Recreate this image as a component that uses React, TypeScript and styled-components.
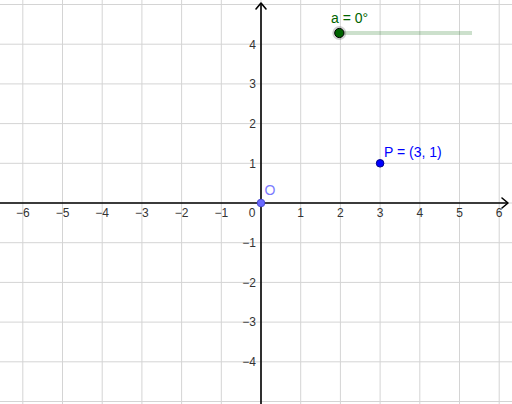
import React from "react";
import styled, { createGlobalStyle } from "styled-components";

const GlobalStyle = createGlobalStyle`
  html, body { margin: 0; padding: 0; background: #ffffff; }
  body { font-family: "Liberation Sans", Arial, sans-serif; overflow: hidden; }
`;

const W = 512;
const H = 404;
const OX = 261;
const OY = 203;
const U = 39.7;

const GraphView = styled.div`
  width: ${W}px;
  height: ${H}px;
  background: #ffffff;
  overflow: hidden;
`;

const Canvas = styled.svg`
  display: block;
  width: ${W}px;
  height: ${H}px;
`;

const GridLine = styled.line`
  stroke: #d4d4d4;
  stroke-width: 1;
`;

const AxisLine = styled.line`
  stroke: #000000;
  stroke-width: 1.6;
`;

const Arrow = styled.polyline`
  fill: none;
  stroke: #000000;
  stroke-width: 1.6;
  stroke-linecap: round;
  stroke-linejoin: round;
`;

const TickLabel = styled.text<{ $anchor: "middle" | "end" }>`
  font-family: "Liberation Sans", Arial, sans-serif;
  font-size: 12px;
  fill: #333333;
  text-anchor: ${(p) => p.$anchor};
`;

const ObjLabel = styled.text<{ $color: string }>`
  font-family: "Liberation Sans", Arial, sans-serif;
  font-size: 14px;
  fill: ${(p) => p.$color};
`;

const PointDot = styled.circle<{ $fill: string; $stroke: string }>`
  fill: ${(p) => p.$fill};
  stroke: ${(p) => p.$stroke};
  stroke-width: 1;
`;

const SliderTrack = styled.line`
  stroke: #006400;
  stroke-opacity: 0.2;
  stroke-width: 4;
`;

const Halo = styled.circle`
  fill: #000000;
  fill-opacity: 0.18;
`;

const fmt = (k: number) => (k < 0 ? `\u2212${-k}` : `${k}`);

const xs = [-6, -5, -4, -3, -2, -1, 1, 2, 3, 4, 5, 6];
const ys = [-4, -3, -2, -1, 1, 2, 3, 4];

export default function App() {
  const gridX: number[] = [];
  for (let k = -7; k <= 7; k++) gridX.push(OX + k * U);
  const gridY: number[] = [];
  for (let k = -6; k <= 6; k++) gridY.push(OY - k * U);

  const px = OX + 3 * U;
  const py = OY - 1 * U;
  const sx = 339.3;
  const sy = 33;

  return (
    <>
      <GlobalStyle />
      <GraphView>
        <Canvas viewBox={`0 0 ${W} ${H}`}>
          {gridX.map((x) => (
            <GridLine key={`gx${x}`} x1={x} y1={0} x2={x} y2={H} />
          ))}
          {gridY.map((y) => (
            <GridLine key={`gy${y}`} x1={0} y1={y} x2={W} y2={y} />
          ))}

          <AxisLine x1={0} y1={OY} x2={508} y2={OY} />
          <AxisLine x1={OX} y1={3} x2={OX} y2={H} />
          <Arrow points={`502,${OY - 5} 508,${OY} 502,${OY + 5}`} />
          <Arrow points={`${OX - 5},9 ${OX},3 ${OX + 5},9`} />

          {xs.map((k) => (
            <TickLabel key={`lx${k}`} $anchor="middle" x={OX + k * U} y={217}>
              {fmt(k)}
            </TickLabel>
          ))}
          {ys.map((k) => (
            <TickLabel key={`ly${k}`} $anchor="end" x={256} y={OY - k * U + 4.3}>
              {fmt(k)}
            </TickLabel>
          ))}
          <TickLabel $anchor="end" x={255.5} y={217}>
            0
          </TickLabel>

          <SliderTrack x1={sx} y1={sy} x2={472} y2={sy} />
          <Halo cx={sx} cy={sy} r={7} />
          <PointDot $fill="#006400" $stroke="#000000" cx={sx} cy={sy} r={4.6} />
          <ObjLabel $color="#006400" x={331} y={23}>
            a = 0°
          </ObjLabel>

          <PointDot $fill="#6a6aff" $stroke="#4a4ad0" cx={OX} cy={OY} r={3.8} />
          <ObjLabel $color="#7b7bff" x={264.5} y={195}>
            O
          </ObjLabel>

          <PointDot $fill="#0000ff" $stroke="#00008b" cx={px} cy={py} r={3.8} />
          <ObjLabel $color="#0000ff" x={384} y={157}>
            P = (3, 1)
          </ObjLabel>
        </Canvas>
      </GraphView>
    </>
  );
}
